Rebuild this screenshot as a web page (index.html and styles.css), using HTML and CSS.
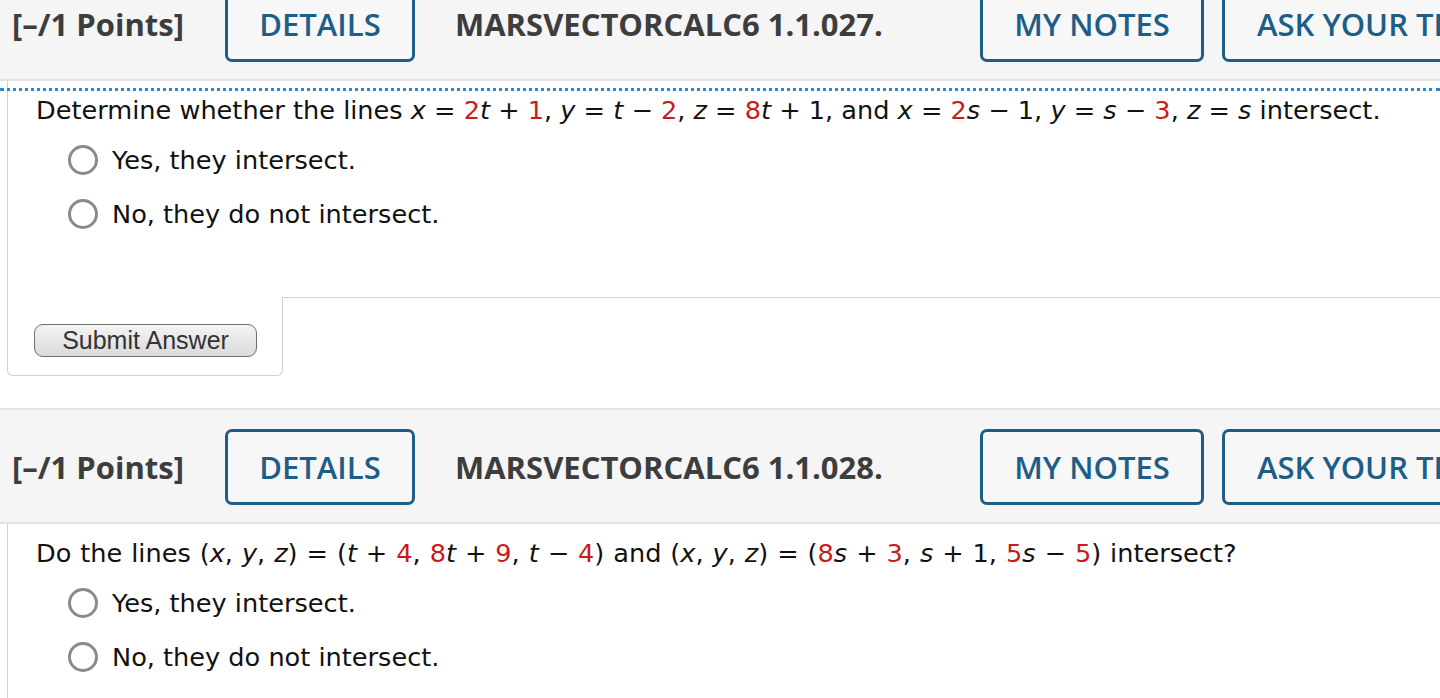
FILE: index.html
```html
<!DOCTYPE html>
<html>
<head>
<meta charset="utf-8">
<link rel="stylesheet" href="styles.css">
</head>
<body>
<div class="page">
  <section class="question first">
    <header class="qhead">
      <div class="points">[–/1 Points]</div>
      <button class="hbtn details">DETAILS</button>
      <div class="qtitle">MARSVECTORCALC6 1.1.027.</div>
      <button class="hbtn notes">MY NOTES</button>
      <button class="hbtn ask">ASK YOUR TEACHER</button>
    </header>
    <div class="qbody focused">
      <p class="prompt">Determine whether the lines <i>x</i> = <span class="r">2</span><i>t</i> + <span class="r">1</span>, <i>y</i> = <i>t</i> − <span class="r">2</span>, <i>z</i> = <span class="r">8</span><i>t</i> + 1, and <i>x</i> = <span class="r">2</span><i>s</i> − 1, <i>y</i> = <i>s</i> − <span class="r">3</span>, <i>z</i> = <i>s</i> intersect.</p>
      <ul class="choices">
        <li><span class="radio"></span>Yes, they intersect.</li>
        <li><span class="radio"></span>No, they do not intersect.</li>
      </ul>
    </div>
    <div class="submit-tab">
      <button class="submit">Submit Answer</button>
    </div>
  </section>

  <section class="question second">
    <header class="qhead">
      <div class="points">[–/1 Points]</div>
      <button class="hbtn details">DETAILS</button>
      <div class="qtitle">MARSVECTORCALC6 1.1.028.</div>
      <button class="hbtn notes">MY NOTES</button>
      <button class="hbtn ask">ASK YOUR TEACHER</button>
    </header>
    <div class="qbody">
      <p class="prompt wide">Do the lines (<i>x</i>, <i>y</i>, <i>z</i>) = (<i>t</i> + <span class="r">4</span>, <span class="r">8</span><i>t</i> + <span class="r">9</span>, <i>t</i> − <span class="r">4</span>) and (<i>x</i>, <i>y</i>, <i>z</i>) = (<span class="r">8</span><i>s</i> + <span class="r">3</span>, <i>s</i> + 1, <span class="r">5</span><i>s</i> − <span class="r">5</span>) intersect?</p>
      <ul class="choices">
        <li><span class="radio"></span>Yes, they intersect.</li>
        <li><span class="radio"></span>No, they do not intersect.</li>
      </ul>
    </div>
  </section>
</div>
</body>
</html>
```
FILE: styles.css
```css
html, body {
  margin: 0;
  padding: 0;
  background: #fff;
  overflow: hidden;
}
.page {
  width: 1440px;
  overflow: hidden;
}
.question.first {
  margin-top: -35px;
}
.question.second {
  margin-top: 32px;
}
.qhead {
  display: flex;
  align-items: center;
  background: #f5f5f5;
  border-top: 2px solid #e3e3e3;
  border-bottom: 2px solid #e3e3e3;
  padding: 19px 0 17px 12px;
  white-space: nowrap;
  overflow: hidden;
  font-family: "Open Sans", "Liberation Sans", sans-serif;
}
.points {
  font-size: 31px;
  font-weight: 700;
  color: #3d3d3d;
  width: 213px;
  flex: none;
}
.qtitle {
  font-size: 31px;
  font-weight: 700;
  color: #3d3d3d;
  width: 565px;
  padding-left: 40px;
  box-sizing: border-box;
  flex: none;
}
.hbtn {
  flex: none;
  height: 76px;
  box-sizing: border-box;
  border: 3px solid #1d5e88;
  border-radius: 7px;
  background: #f7f7f7;
  color: #1d5e88;
  font-family: "Open Sans", "Liberation Sans", sans-serif;
  font-size: 31px;
  font-weight: 600;
  padding: 0;
  text-align: center;
  white-space: nowrap;
}
.details { width: 190px; }
.notes { width: 224px; }
.ask {
  width: 360px;
  margin-left: 18px;
  text-align: left;
  padding-left: 32px;
}
.qbody {
  position: relative;
  margin-left: 7px;
  border-left: 1px solid #d2d2d2;
  padding: 11px 0 0 28px;
  font-family: "DejaVu Sans", Verdana, sans-serif;
  font-size: 25.6px;
  color: #111;
}
.first .qbody {
  border-bottom: 1px solid #d2d2d2;
  padding-bottom: 56px;
}
.second .qbody {
  padding-bottom: 40px;
}
.qbody.focused::before {
  content: "";
  position: absolute;
  left: -8px;
  right: 0;
  top: 7px;
  border-top: 3px dotted #2f86cf;
}
.prompt {
  margin: 0;
  line-height: 36px;
  white-space: nowrap;
}
.prompt.wide {
  word-spacing: 0.8px;
}
.prompt i {
  font-style: italic;
}
.r {
  color: #cc1a1a;
}
.choices {
  list-style: none;
  margin: 5px 0 0 32px;
  padding: 0;
}
.choices li {
  display: flex;
  align-items: center;
  height: 54px;
}
.radio {
  width: 30px;
  height: 30px;
  box-sizing: border-box;
  border: 3px solid #8a8a8a;
  border-radius: 50%;
  background: #fff;
  margin-right: 14px;
  flex: none;
}
.submit-tab {
  position: relative;
  width: 276px;
  height: 79px;
  box-sizing: border-box;
  margin: -1px 0 0 7px;
  background: #fff;
  border: 1px solid #d2d2d2;
  border-top: none;
  border-radius: 0 0 6px 6px;
  padding: 27px 0 0 26px;
}
.submit {
  width: 223px;
  height: 33px;
  border: 1px solid #6f6f6f;
  border-radius: 9px;
  background: linear-gradient(#f4f4f4, #dadada);
  font-family: "Liberation Sans", Arial, sans-serif;
  font-size: 25px;
  color: #333;
  padding: 0;
}
```
